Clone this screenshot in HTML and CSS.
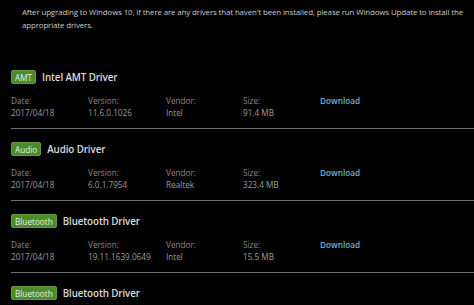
FILE: index.html
```html
<!DOCTYPE html>
<html>
<head>
<meta charset="utf-8">
<link rel="stylesheet" href="styles.css">
</head>
<body>
<p class="intro">After upgrading to Windows 10, if there are any drivers that haven't been installed, please run Windows Update to install the appropriate drivers.</p>
<div class="list">
  <div class="item">
    <div class="head"><span class="badge">AMT</span><span class="title">Intel AMT Driver</span></div>
    <div class="grid">
      <span class="lbl">Date:</span><span class="lbl">Version:</span><span class="lbl">Vendor:</span><span class="lbl">Size:</span><a class="dl">Download</a>
      <span class="val">2017/04/18</span><span class="val">11.6.0.1026</span><span class="val">Intel</span><span class="val">91.4 MB</span><span></span>
    </div>
  </div>
  <div class="item">
    <div class="head"><span class="badge">Audio</span><span class="title">Audio Driver</span></div>
    <div class="grid">
      <span class="lbl">Date:</span><span class="lbl">Version:</span><span class="lbl">Vendor:</span><span class="lbl">Size:</span><a class="dl">Download</a>
      <span class="val">2017/04/18</span><span class="val">6.0.1.7954</span><span class="val">Realtek</span><span class="val">323.4 MB</span><span></span>
    </div>
  </div>
  <div class="item">
    <div class="head"><span class="badge">Bluetooth</span><span class="title">Bluetooth Driver</span></div>
    <div class="grid">
      <span class="lbl">Date:</span><span class="lbl">Version:</span><span class="lbl">Vendor:</span><span class="lbl">Size:</span><a class="dl">Download</a>
      <span class="val">2017/04/18</span><span class="val">19.11.1639.0649</span><span class="val">Intel</span><span class="val">15.5 MB</span><span></span>
    </div>
  </div>
  <div class="item last">
    <div class="head"><span class="badge">Bluetooth</span><span class="title">Bluetooth Driver</span></div>
  </div>
</div>
</body>
</html>
```
FILE: styles.css
```css
html, body {
  margin: 0;
  padding: 0;
  background: #000;
  overflow: hidden;
}
body {
  font-family: "Open Sans", "DejaVu Sans", sans-serif;
  width: 474px;
  height: 305px;
}
.intro {
  margin: 0;
  padding: 6px 0 0 22px;
  font-size: 7.9px;
  letter-spacing: -0.12px;
  line-height: 13px;
  color: #c8c8c8;
  height: 51px;
}
.list {
  padding-left: 11px;
}
.item {
  padding-top: 13px;
  padding-bottom: 9px;
  border-bottom: 1px solid #6e6e6e;
}
.item.last {
  border-bottom: none;
}
.head {
  display: flex;
  align-items: center;
  gap: 6px;
  height: 14px;
}
.badge {
  display: flex;
  align-items: center;
  height: 14px;
  box-sizing: border-box;
  padding: 0 3px;
  background: #4c8a2c;
  border: 1px solid #5c9a3a;
  border-radius: 2px;
  color: #e6eee0;
  font-size: 8.2px;
}
.title {
  color: #dcdcdc;
  font-size: 9.8px;
  font-weight: 600;
  letter-spacing: -0.1px;
}
.grid {
  display: grid;
  grid-template-columns: 77px 78px 77px 77px 80px;
  margin-top: 11px;
  line-height: 12px;
}
.lbl {
  color: #8a8a8a;
  font-size: 8.2px;
}
.val {
  color: #9c9c9c;
  font-size: 8.2px;
}
.dl {
  color: #62b6d4;
  font-size: 8.2px;
  font-weight: 600;
}
```
